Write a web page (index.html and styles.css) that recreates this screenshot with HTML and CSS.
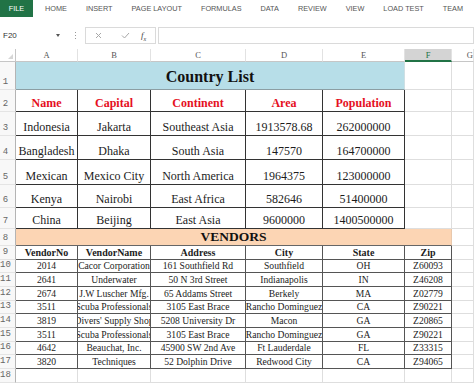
FILE: index.html
```html
<!DOCTYPE html>
<html lang="en">
<head>
    <meta charset="UTF-8">
    <title>Country List - Excel</title>
    <link rel="stylesheet" href="styles.css">
</head>
<body>
    <!-- Ribbon tabs -->
    <div class="ribbon">
        <div class="tab-file">FILE</div>
        <div class="tabs">
            <span>HOME</span>
            <span>INSERT</span>
            <span>PAGE LAYOUT</span>
            <span>FORMULAS</span>
            <span>DATA</span>
            <span>REVIEW</span>
            <span>VIEW</span>
            <span>LOAD TEST</span>
            <span>TEAM</span>
        </div>
    </div>

    <!-- Formula bar -->
    <div class="formula-bar">
        <div class="name-box">
            <span>F20</span>
            <span class="drop"></span>
        </div>
        <div class="grip"><i></i><i></i><i></i></div>
        <div class="fx-box">
            <svg class="icon-x" width="7" height="7" viewBox="0 0 7 7"><path d="M1 1L6 6M6 1L1 6" stroke="#a8a8a8" stroke-width="1" fill="none"/></svg>
            <svg class="icon-ok" width="9" height="7" viewBox="0 0 9 7"><path d="M1 3.5L3.5 6L8 1" stroke="#a8a8a8" stroke-width="1" fill="none"/></svg>
            <span class="fx">f<sub>x</sub></span>
        </div>
        <div class="formula-input"></div>
    </div>

    <!-- Sheet -->
    <div class="sheet">
        <div class="c corner"><span class="tri"></span></div>
        <div class="c ch">A</div>
        <div class="c ch">B</div>
        <div class="c ch">C</div>
        <div class="c ch">D</div>
        <div class="c ch">E</div>
        <div class="c ch sel">F</div>
        <div class="c ch ch-g">G</div>

        <div class="c rh">1</div>
        <div class="c title">Country List</div>
        <div class="c"></div><div class="c"></div>

        <div class="c rh">2</div>
        <div class="c ct hd">Name</div>
        <div class="c ct hd">Capital</div>
        <div class="c ct hd">Continent</div>
        <div class="c ct hd">Area</div>
        <div class="c ct hd">Population</div>
        <div class="c"></div><div class="c"></div>

        <div class="c rh">3</div>
        <div class="c ct">Indonesia</div>
        <div class="c ct">Jakarta</div>
        <div class="c ct">Southeast Asia</div>
        <div class="c ct">1913578.68</div>
        <div class="c ct">262000000</div>
        <div class="c"></div><div class="c"></div>

        <div class="c rh">4</div>
        <div class="c ct">Bangladesh</div>
        <div class="c ct">Dhaka</div>
        <div class="c ct">South Asia</div>
        <div class="c ct">147570</div>
        <div class="c ct">164700000</div>
        <div class="c"></div><div class="c"></div>

        <div class="c rh">5</div>
        <div class="c ct">Mexican</div>
        <div class="c ct">Mexico City</div>
        <div class="c ct">North America</div>
        <div class="c ct">1964375</div>
        <div class="c ct">123000000</div>
        <div class="c"></div><div class="c"></div>

        <div class="c rh">6</div>
        <div class="c ct">Kenya</div>
        <div class="c ct">Nairobi</div>
        <div class="c ct">East Africa</div>
        <div class="c ct">582646</div>
        <div class="c ct">51400000</div>
        <div class="c"></div><div class="c"></div>

        <div class="c rh">7</div>
        <div class="c ct">China</div>
        <div class="c ct">Beijing</div>
        <div class="c ct">East Asia</div>
        <div class="c ct">9600000</div>
        <div class="c ct">1400500000</div>
        <div class="c"></div><div class="c"></div>

        <div class="c rh">8</div>
        <div class="c band">VENDORS</div>
        <div class="c"></div>

        <div class="c rh">9</div>
        <div class="c vt vh">VendorNo</div>
        <div class="c vt vh">VendorName</div>
        <div class="c vt vh">Address</div>
        <div class="c vt vh">City</div>
        <div class="c vt vh">State</div>
        <div class="c vt vh">Zip</div>
        <div class="c"></div>

        <div class="c rh">10</div>
        <div class="c vt">2014</div>
        <div class="c vt"><span>Cacor Corporation</span></div>
        <div class="c vt">161 Southfield Rd</div>
        <div class="c vt">Southfield</div>
        <div class="c vt">OH</div>
        <div class="c vt">Z60093</div>
        <div class="c"></div>

        <div class="c rh">11</div>
        <div class="c vt">2641</div>
        <div class="c vt">Underwater</div>
        <div class="c vt">50 N 3rd Street</div>
        <div class="c vt">Indianapolis</div>
        <div class="c vt">IN</div>
        <div class="c vt">Z46208</div>
        <div class="c"></div>

        <div class="c rh">12</div>
        <div class="c vt">2674</div>
        <div class="c vt"><span>J.W Luscher Mfg.</span></div>
        <div class="c vt">65 Addams Street</div>
        <div class="c vt">Berkely</div>
        <div class="c vt">MA</div>
        <div class="c vt">Z02779</div>
        <div class="c"></div>

        <div class="c rh">13</div>
        <div class="c vt">3511</div>
        <div class="c vt"><span>Scuba Professionals</span></div>
        <div class="c vt">3105 East Brace</div>
        <div class="c vt"><span>Rancho Dominguez</span></div>
        <div class="c vt">CA</div>
        <div class="c vt">Z90221</div>
        <div class="c"></div>

        <div class="c rh">14</div>
        <div class="c vt">3819</div>
        <div class="c vt"><span>Divers' Supply Shop</span></div>
        <div class="c vt">5208 University Dr</div>
        <div class="c vt">Macon</div>
        <div class="c vt">GA</div>
        <div class="c vt">Z20865</div>
        <div class="c"></div>

        <div class="c rh">15</div>
        <div class="c vt">3511</div>
        <div class="c vt"><span>Scuba Professionals</span></div>
        <div class="c vt">3105 East Brace</div>
        <div class="c vt"><span>Rancho Dominguez</span></div>
        <div class="c vt">GA</div>
        <div class="c vt">Z90221</div>
        <div class="c"></div>

        <div class="c rh">16</div>
        <div class="c vt">4642</div>
        <div class="c vt">Beauchat, Inc.</div>
        <div class="c vt">45900 SW 2nd Ave</div>
        <div class="c vt">Ft Lauderdale</div>
        <div class="c vt">FL</div>
        <div class="c vt">Z33315</div>
        <div class="c"></div>

        <div class="c rh">17</div>
        <div class="c vt">3820</div>
        <div class="c vt">Techniques</div>
        <div class="c vt">52 Dolphin Drive</div>
        <div class="c vt">Redwood City</div>
        <div class="c vt">CA</div>
        <div class="c vt">Z94065</div>
        <div class="c"></div>

        <div class="c rh">18</div>
        <div class="c"></div><div class="c"></div><div class="c"></div>
        <div class="c"></div><div class="c"></div><div class="c"></div>
        <div class="c"></div>
    </div>
</body>
</html>
```

FILE: styles.css
```css
* {
    margin: 0;
    padding: 0;
    box-sizing: border-box;
}

body {
    width: 474px;
    height: 383px;
    overflow: hidden;
    background: #fff;
    font-family: "Liberation Sans", Arial, sans-serif;
}

/* Ribbon tabs */
.ribbon {
    display: flex;
    align-items: center;
    height: 17px;
}

.tab-file {
    width: 33px;
    height: 17px;
    background: #217346;
    color: #fff;
    font-size: 7.3px;
    display: flex;
    align-items: center;
    justify-content: center;
}

.tabs {
    display: flex;
    gap: 19px;
    margin-left: 12px;
    font-size: 7.3px;
    color: #555;
}

/* Formula bar */
.formula-bar {
    display: flex;
    align-items: center;
    height: 17px;
    margin-top: 10px;
}

.name-box {
    width: 66px;
    height: 17px;
    display: flex;
    align-items: center;
    justify-content: space-between;
    padding: 0 6px 0 3px;
    font-size: 8px;
    color: #333;
}

.drop {
    width: 0;
    height: 0;
    border-left: 2.5px solid transparent;
    border-right: 2.5px solid transparent;
    border-top: 3px solid #555;
}

.grip {
    width: 19px;
    display: flex;
    flex-direction: column;
    align-items: center;
    gap: 2px;
}

.grip i {
    width: 1px;
    height: 1px;
    background: #999;
}

.fx-box {
    width: 71px;
    height: 17px;
    border: 1px solid #dadada;
    display: flex;
    align-items: center;
    padding-left: 9px;
}

.icon-ok {
    margin-left: 19px;
}

.fx {
    margin-left: 11px;
    font-family: "Liberation Serif", serif;
    font-style: italic;
    font-size: 9px;
    color: #444;
}

.fx sub {
    font-size: 6px;
}

.formula-input {
    flex: 1;
    height: 17px;
    margin-left: 2px;
    border: 1px solid #dadada;
}

/* Sheet grid */
.sheet {
    display: grid;
    grid-template-columns: 16px 62px 73px 95px 77px 82px 47px 22px;
    grid-template-rows: 13px 28px 22px 24px 24px 25px 23px 21px 17px 14px 13px 14px 14px 13px 14px 14px 13px 14px 14px;
    margin-top: 5px;
}

.c {
    display: flex;
    align-items: flex-end;
    justify-content: center;
    overflow: hidden;
    white-space: nowrap;
    border-right: 1px solid #dedede;
    border-bottom: 1px solid #dedede;
}

.corner {
    background: #fff;
    border-right-color: #c6c6c6;
    border-bottom-color: #c6c6c6;
    justify-content: flex-end;
    padding: 0 2px 2px 0;
}

.tri {
    width: 0;
    height: 0;
    border-left: 5px solid transparent;
    border-bottom: 5px solid #d6d6d6;
}

.ch {
    align-items: center;
    font-family: "Liberation Serif", serif;
    font-size: 8.5px;
    color: #555;
    border-right-color: #e2e2e2;
    border-bottom-color: #c6c6c6;
}

.ch-g {
    justify-content: flex-end;
    padding-right: 0;
}

.ch.sel {
    background: #d4d4d4;
    color: #217346;
    border-bottom: 2px solid #217346;
}

.rh {
    background: #f8f8f8;
    font-family: "Liberation Mono", monospace;
    font-size: 9px;
    color: #666;
    padding: 0 4px 2px 0;
    border-right-color: #b4b4b4;
    border-bottom-color: #e4e4e4;
}

/* Country list */
.title {
    grid-column: span 5;
    align-items: center;
    padding-top: 3px;
    background: #b7dee8;
    font-family: "Liberation Serif", serif;
    font-weight: bold;
    font-size: 16px;
    color: #111;
    border-bottom-color: #8c9ea3;
    border-right-color: #cfdfe3;
}

.ct {
    font-family: "Liberation Serif", serif;
    font-size: 12px;
    line-height: 14px;
    padding-bottom: 1px;
    color: #1c1c1c;
    border-right-color: #333;
    border-bottom-color: #333;
}

.hd {
    color: #e5101e;
    font-weight: bold;
}

/* Vendors */
.band {
    grid-column: span 6;
    align-items: center;
    background: #fcd5b4;
    font-family: "Liberation Serif", serif;
    font-weight: bold;
    font-size: 13.5px;
    color: #111;
    border-right-color: #e8c8ac;
    border-bottom-color: #666;
}

.vt {
    font-family: "Liberation Serif", serif;
    font-size: 9.6px;
    line-height: 12px;
    color: #1c1c1c;
    border-right-color: #555;
    border-bottom-color: #555;
}

.vh {
    font-weight: bold;
    font-size: 10px;
}

.vt span {
    flex-shrink: 0;
}
```
